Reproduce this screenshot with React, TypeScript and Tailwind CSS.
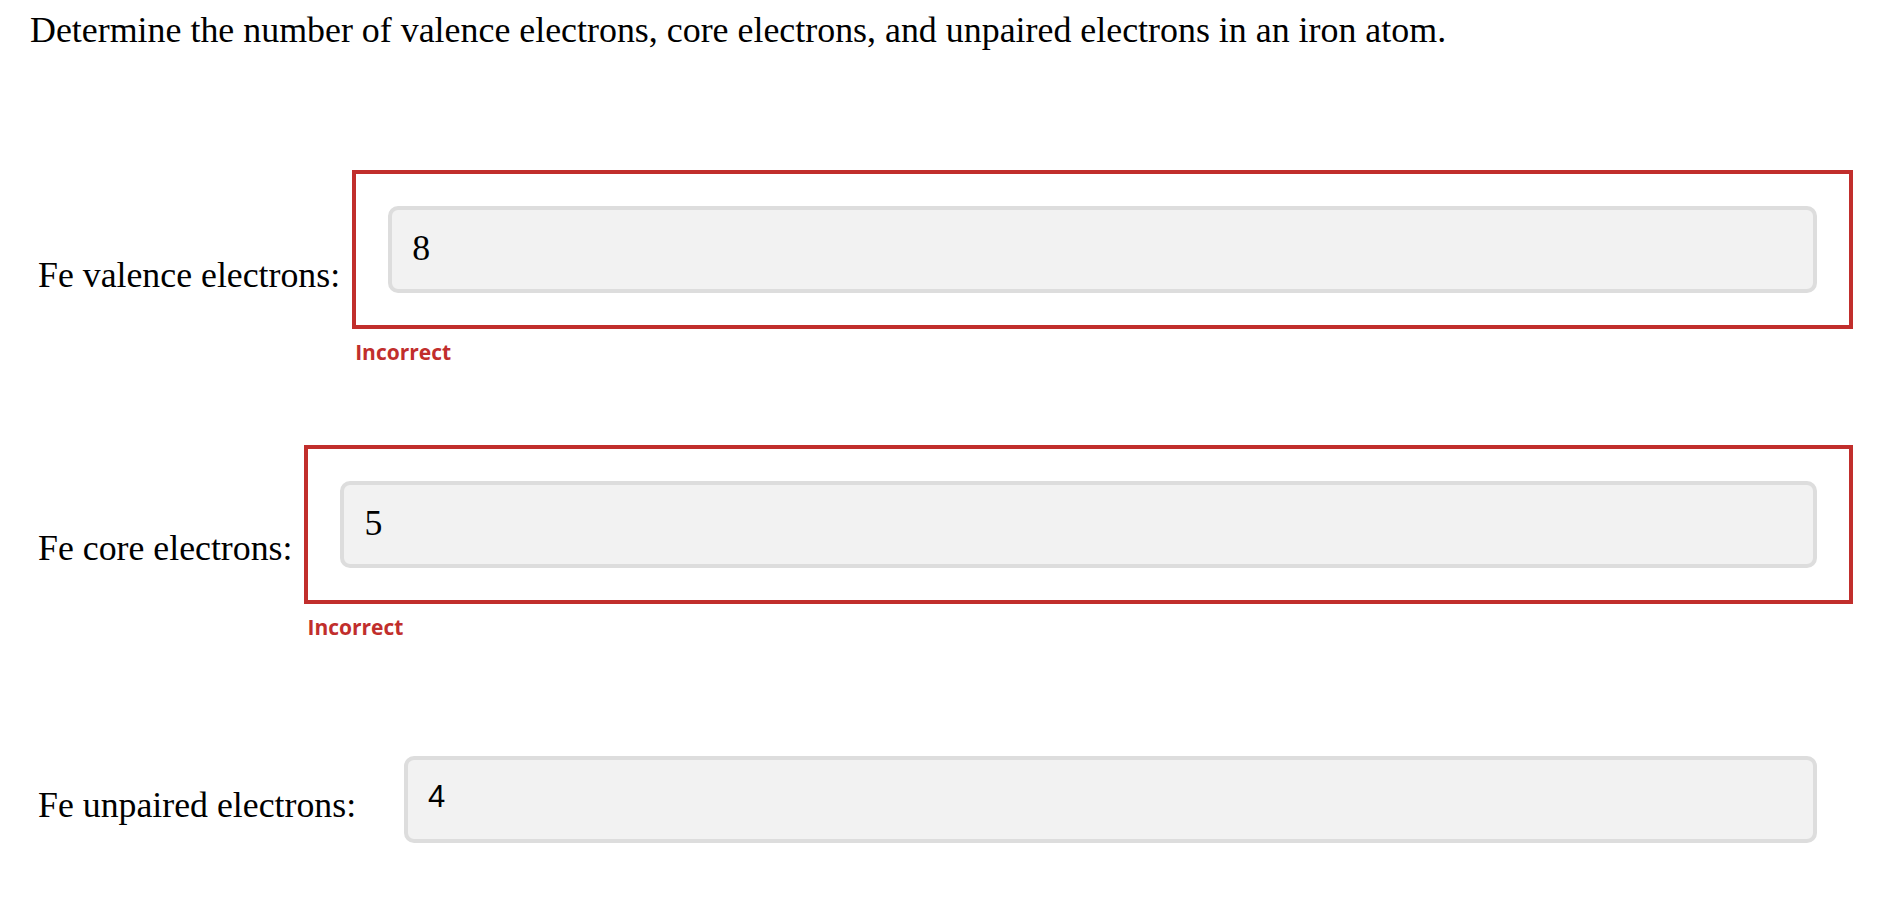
import React from "react";

const serif = { fontFamily: '"Liberation Serif", "Times New Roman", serif' };

function Field({
  label,
  value,
  incorrect,
  labelTop,
  sans,
}: {
  label: string;
  value: string;
  incorrect: boolean;
  labelTop: string;
  sans?: boolean;
}) {
  return (
    <div className="flex items-start pl-[38px] pr-[33px]">
      <div
        className={`${labelTop} shrink-0 whitespace-nowrap text-[35.8px] leading-[40px] text-black font-['Liberation_Serif','Times_New_Roman',serif]`}
      >
        {label}
      </div>
      <div className="ml-[12px] flex flex-1 flex-col">
        <div
          className={
            incorrect
              ? "border-4 border-[#c12e2c] p-[32px]"
              : "border-4 border-transparent p-[32px]"
          }
        >
          <div className="h-[87px] rounded-[10px] border-4 border-[#dddddd] bg-[#f2f2f2] pl-[20px]">
            {sans ? (
              <div className="pt-[19px] text-[31px] leading-[36px] text-black font-['Liberation_Sans',Arial,sans-serif]">
                {value}
              </div>
            ) : (
              <div className="pt-[18px] text-[35.8px] leading-[40px] text-black font-['Liberation_Serif','Times_New_Roman',serif]">
                {value}
              </div>
            )}
          </div>
        </div>
        {incorrect && (
          <div className="ml-[3px] mt-[11px] text-[21px] font-bold leading-[24px] text-[#c12e2c] font-['Open_Sans',sans-serif]">
            Incorrect
          </div>
        )}
      </div>
    </div>
  );
}

export default function App() {
  return (
    <div className="min-h-[908px] w-full bg-white" style={serif}>
      <div className="pl-[30px] pt-[10px] text-[35.9px] leading-[40px] text-black font-['Liberation_Serif','Times_New_Roman',serif]">
        Determine the number of valence electrons, core electrons, and unpaired electrons in an iron atom.
      </div>
      <div className="mt-[120px] flex flex-col gap-[81px]">
        <Field label="Fe valence electrons:" value="8" incorrect labelTop="mt-[85px]" />
        <Field label="Fe core electrons:" value="5" incorrect labelTop="mt-[83px]" />
        <Field label="Fe unpaired electrons:" value="4" incorrect={false} labelTop="mt-[65px]" sans />
      </div>
    </div>
  );
}
